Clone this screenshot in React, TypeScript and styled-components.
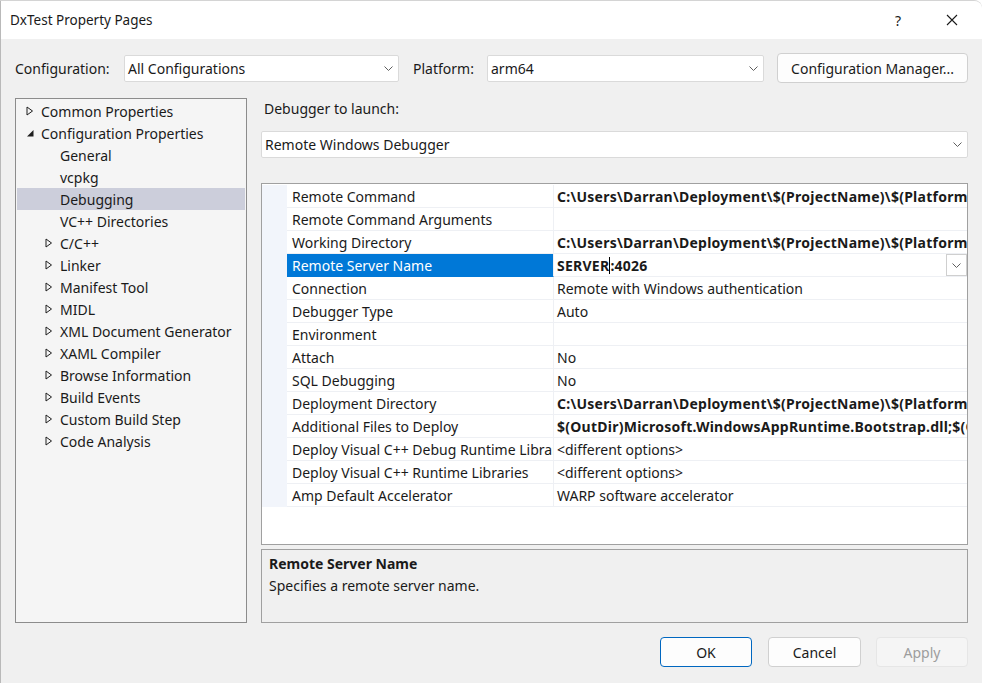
import styled, { createGlobalStyle } from "styled-components";

const GlobalStyle = createGlobalStyle`
  html, body {
    margin: 0;
    padding: 0;
    background: #ffffff;
  }
  body {
    font-family: "Noto Sans", "Open Sans", sans-serif;
    font-size: 14px;
    color: #1a1a1a;
  }
  * {
    box-sizing: border-box;
  }
`;

const treeItems = [
  { label: "Common Properties", level: 0, kind: "closed" },
  { label: "Configuration Properties", level: 0, kind: "open" },
  { label: "General", level: 1, kind: "leaf" },
  { label: "vcpkg", level: 1, kind: "leaf" },
  { label: "Debugging", level: 1, kind: "leaf", selected: true },
  { label: "VC++ Directories", level: 1, kind: "leaf" },
  { label: "C/C++", level: 1, kind: "closed" },
  { label: "Linker", level: 1, kind: "closed" },
  { label: "Manifest Tool", level: 1, kind: "closed" },
  { label: "MIDL", level: 1, kind: "closed" },
  { label: "XML Document Generator", level: 1, kind: "closed" },
  { label: "XAML Compiler", level: 1, kind: "closed" },
  { label: "Browse Information", level: 1, kind: "closed" },
  { label: "Build Events", level: 1, kind: "closed" },
  { label: "Custom Build Step", level: 1, kind: "closed" },
  { label: "Code Analysis", level: 1, kind: "closed" },
];

const deployPath = "C:\\Users\\Darran\\Deployment\\$(ProjectName)\\$(Platform)\\$(Configuration)";

const properties = [
  { name: "Remote Command", value: deployPath, bold: true },
  { name: "Remote Command Arguments", value: "" },
  { name: "Working Directory", value: deployPath, bold: true },
  { name: "Remote Server Name", value: "SERVER:4026", bold: true, selected: true },
  { name: "Connection", value: "Remote with Windows authentication" },
  { name: "Debugger Type", value: "Auto" },
  { name: "Environment", value: "" },
  { name: "Attach", value: "No" },
  { name: "SQL Debugging", value: "No" },
  { name: "Deployment Directory", value: deployPath, bold: true },
  {
    name: "Additional Files to Deploy",
    value: "$(OutDir)Microsoft.WindowsAppRuntime.Bootstrap.dll;$(OutDir)resources.pri",
    bold: true,
  },
  { name: "Deploy Visual C++ Debug Runtime Libraries", value: "<different options>" },
  { name: "Deploy Visual C++ Runtime Libraries", value: "<different options>" },
  { name: "Amp Default Accelerator", value: "WARP software accelerator" },
];

const Chevron = () => (
  <svg width="9" height="5" viewBox="0 0 9 5">
    <path d="M0.5 0.5 L4.5 4.5 L8.5 0.5" fill="none" stroke="#5f5f5f" strokeWidth="1" />
  </svg>
);

const ClosedArrow = () => (
  <svg width="8" height="10" viewBox="0 0 8 10">
    <path d="M1 1 L6.5 5 L1 9 Z" fill="none" stroke="#1e1e1e" strokeWidth="1" />
  </svg>
);

const OpenArrow = () => (
  <svg width="8" height="10" viewBox="0 0 8 10">
    <path d="M7.5 2 L7.5 8.5 L1 8.5 Z" fill="#1e1e1e" />
  </svg>
);

const App = () => {
  return (
    <Window>
      <GlobalStyle />
      <TitleBar>
        <Title>DxTest Property Pages</Title>
        <TitleButtons>
          <HelpGlyph>?</HelpGlyph>
          <CloseGlyph>
            <svg width="12" height="12" viewBox="0 0 12 12">
              <path d="M1 1 L11 11 M11 1 L1 11" stroke="#1a1a1a" strokeWidth="1.1" />
            </svg>
          </CloseGlyph>
        </TitleButtons>
      </TitleBar>

      <Body>
        <ConfigRow>
          <FieldLabel $width={109}>Configuration:</FieldLabel>
          <Combo $width={275}>
            <ComboText>All Configurations</ComboText>
            <Chevron />
          </Combo>
          <FieldLabel $width={74} $gap={14}>Platform:</FieldLabel>
          <Combo $width={277}>
            <ComboText>arm64</ComboText>
            <Chevron />
          </Combo>
          <DialogButton $width={191} $gap={13} $height={30}>
            Configuration Manager...
          </DialogButton>
        </ConfigRow>

        <Main>
          <Tree>
            {treeItems.map((item) => (
              <TreeRow key={item.label} $selected={!!item.selected}>
                <TreeArrow $level={item.level}>
                  {item.kind === "closed" && <ClosedArrow />}
                  {item.kind === "open" && <OpenArrow />}
                </TreeArrow>
                <span>{item.label}</span>
              </TreeRow>
            ))}
          </Tree>

          <RightPane>
            <SectionLabel>Debugger to launch:</SectionLabel>
            <Combo $width={707}>
              <ComboText>Remote Windows Debugger</ComboText>
              <Chevron />
            </Combo>

            <Grid>
              <GridRows>
                {properties.map((p) => (
                  <GridRow key={p.name}>
                    <Gutter />
                    <NameCell $selected={!!p.selected}>{p.name}</NameCell>
                    <ValueCell $bold={!!p.bold}>
                      {p.selected ? (
                        <>
                          <span>SERVER</span>
                          <Caret />
                          <span>:4026</span>
                          <CellDrop>
                            <Chevron />
                          </CellDrop>
                        </>
                      ) : (
                        p.value
                      )}
                    </ValueCell>
                  </GridRow>
                ))}
              </GridRows>
            </Grid>

            <Description>
              <DescTitle>Remote Server Name</DescTitle>
              <DescText>Specifies a remote server name.</DescText>
            </Description>
          </RightPane>
        </Main>

        <Footer>
          <DialogButton $width={92} $height={30} $primary>
            OK
          </DialogButton>
          <DialogButton $width={93} $height={30} $gap={16}>
            Cancel
          </DialogButton>
          <DialogButton $width={92} $height={30} $gap={15} $disabled>
            Apply
          </DialogButton>
        </Footer>
      </Body>
    </Window>
  );
};

export default App;

const Window = styled.div`
  width: 982px;
  height: 683px;
  background: #f0f0f0;
  border-left: 1px solid #b9b9b9;
  border-top: 1px solid #d4d4d4;
  border-top-right-radius: 8px;
  overflow: hidden;
  display: flex;
  flex-direction: column;
`;

const TitleBar = styled.div`
  height: 38px;
  background: #ffffff;
  display: flex;
  align-items: center;
  justify-content: space-between;
  padding-left: 9px;
`;

const Title = styled.div`
  font-size: 13.5px;
  color: #1a1a1a;
`;

const TitleButtons = styled.div`
  display: flex;
  align-items: center;
  height: 100%;
`;

const HelpGlyph = styled.div`
  width: 56px;
  text-align: center;
  font-size: 14px;
  color: #1a1a1a;
`;

const CloseGlyph = styled.div`
  width: 56px;
  display: flex;
  justify-content: center;
  padding-right: 4px;
`;

const Body = styled.div`
  flex: 1;
  display: flex;
  flex-direction: column;
  padding: 14px 14px 0 14px;
`;

const ConfigRow = styled.div`
  display: flex;
  align-items: center;
  height: 30px;
`;

const FieldLabel = styled.div<{ $width: number; $gap?: number }>`
  width: ${(p) => p.$width}px;
  margin-left: ${(p) => p.$gap || 0}px;
  font-size: 14px;
  white-space: nowrap;
`;

const Combo = styled.div<{ $width: number }>`
  width: ${(p) => p.$width}px;
  height: 27px;
  background: #ffffff;
  border: 1px solid #dadada;
  border-radius: 2px;
  display: flex;
  align-items: center;
  padding: 0 5px 0 3px;
  flex-shrink: 0;
`;

const ComboText = styled.div`
  flex: 1;
  font-size: 14px;
  white-space: nowrap;
`;

const DialogButton = styled.div<{
  $width: number;
  $height: number;
  $gap?: number;
  $primary?: boolean;
  $disabled?: boolean;
}>`
  width: ${(p) => p.$width}px;
  height: ${(p) => p.$height}px;
  margin-left: ${(p) => p.$gap || 0}px;
  display: flex;
  align-items: center;
  justify-content: center;
  font-size: 14px;
  border-radius: 4px;
  white-space: nowrap;
  background: ${(p) => (p.$disabled ? "#f5f5f5" : "#fdfdfd")};
  color: ${(p) => (p.$disabled ? "#9d9d9d" : "#1a1a1a")};
  border: 1px solid
    ${(p) => (p.$primary ? "#0067c0" : p.$disabled ? "#e6e6e6" : "#d0d0d0")};
  flex-shrink: 0;
`;

const Main = styled.div`
  display: flex;
  gap: 14px;
  margin-top: 15px;
  height: 525px;
`;

const Tree = styled.div`
  width: 233px;
  height: 100%;
  background: #f5f5f5;
  border: 1px solid #8c8c8c;
  padding: 1px 1px 0 1px;
`;

const TreeRow = styled.div<{ $selected: boolean }>`
  height: 22px;
  display: flex;
  align-items: center;
  font-size: 14px;
  white-space: nowrap;
  background: ${(p) => (p.$selected ? "#cccedb" : "transparent")};
`;

const TreeArrow = styled.div<{ $level: number }>`
  width: 15px;
  margin-left: ${(p) => 9 + p.$level * 19}px;
  display: flex;
  align-items: center;
  padding-bottom: 1px;
`;

const RightPane = styled.div`
  width: 707px;
  display: flex;
  flex-direction: column;
`;

const SectionLabel = styled.div`
  height: 20px;
  margin: 0 0 13px 3px;
  font-size: 14px;
  display: flex;
  align-items: center;
`;

const Grid = styled.div`
  margin-top: 25px;
  height: 362px;
  background: #ffffff;
  border: 1px solid #a0a0a0;
  overflow: hidden;
`;

const GridRows = styled.div`
  display: flex;
  flex-direction: column;
  padding-top: 1px;
`;

const GridRow = styled.div`
  display: flex;
  height: 23px;
`;

const Gutter = styled.div`
  width: 25px;
  flex-shrink: 0;
  background: #f2f5fb;
`;

const NameCell = styled.div<{ $selected: boolean }>`
  width: 267px;
  flex-shrink: 0;
  padding-left: 5px;
  display: flex;
  align-items: center;
  font-size: 14px;
  white-space: nowrap;
  overflow: hidden;
  background: ${(p) => (p.$selected ? "#0078d7" : "#ffffff")};
  color: ${(p) => (p.$selected ? "#ffffff" : "#1a1a1a")};
  border-bottom: 1px solid ${(p) => (p.$selected ? "#0078d7" : "#eef0f4")};
  border-right: 1px solid #eef0f4;
`;

const ValueCell = styled.div<{ $bold: boolean }>`
  flex: 1;
  min-width: 0;
  position: relative;
  padding-left: 3px;
  display: flex;
  align-items: center;
  font-size: 14px;
  font-weight: ${(p) => (p.$bold ? 700 : 400)};
  letter-spacing: ${(p) => (p.$bold ? "0.25px" : "0")};
  white-space: nowrap;
  overflow: hidden;
  border-bottom: 1px solid #eef0f4;
`;

const Caret = styled.span`
  display: inline-block;
  width: 1px;
  height: 17px;
  background: #000000;
`;

const CellDrop = styled.div`
  position: absolute;
  right: 0;
  top: 0;
  width: 21px;
  height: 22px;
  border: 1px solid #cfcfcf;
  background: #ffffff;
  display: flex;
  align-items: center;
  justify-content: center;
`;

const Description = styled.div`
  margin-top: 4px;
  height: 74px;
  border: 1px solid #a0a0a0;
  background: #f0f0f0;
  padding: 2px 7px;
`;

const DescTitle = styled.div`
  font-size: 14px;
  font-weight: 700;
  height: 22px;
  display: flex;
  align-items: center;
`;

const DescText = styled.div`
  font-size: 14px;
  height: 22px;
  display: flex;
  align-items: center;
`;

const Footer = styled.div`
  display: flex;
  justify-content: flex-end;
  margin-top: 14px;
`;
